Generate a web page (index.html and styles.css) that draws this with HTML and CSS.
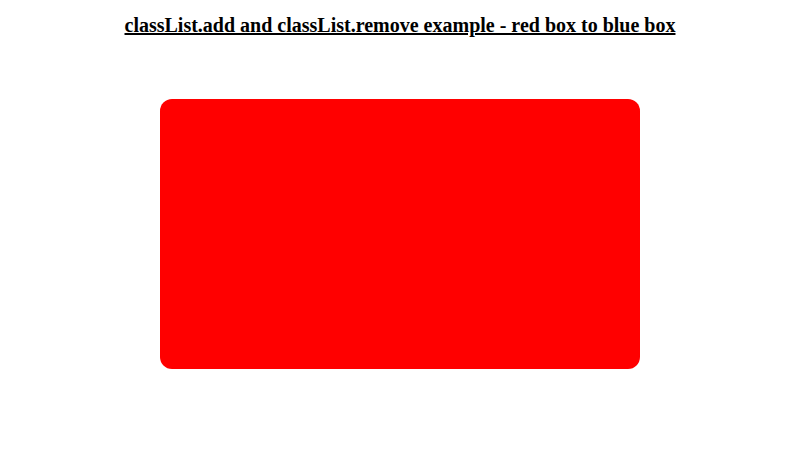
FILE: index.html
```html
<!DOCTYPE html>
<html>
<head>
<meta charset="utf-8">
<link rel="stylesheet" href="styles.css">
</head>
<body>
<h1 class="title">classList.add and classList.remove example - red box to blue box</h1>
<div class="box red"></div>
</body>
</html>
```
FILE: styles.css
```css
html, body { margin: 0; padding: 0; background: #fff; }
body { font-family: "Liberation Serif", serif; }
.title {
  margin: 15px 0 0;
  text-align: center;
  font-size: 20px;
  line-height: 20px;
  font-weight: bold;
  text-decoration: underline;
  color: #000;
}
.box {
  width: 480px;
  height: 270px;
  margin: 64px auto 0;
  border-radius: 12px;
}
.red { background: #ff0000; }
```
